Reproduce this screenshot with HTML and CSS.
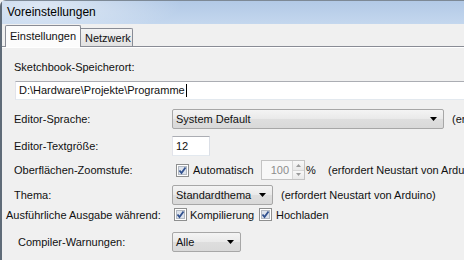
FILE: index.html
```html
<!DOCTYPE html>
<html lang="de">
<head>
  <meta charset="UTF-8" />
  <title>Voreinstellungen</title>
  <link rel="stylesheet" href="styles.css">
</head>
<body>
  <div class="window">
    <div class="titlebar">Voreinstellungen</div>

    <div class="tabs">
      <div class="tab tab-active">Einstellungen</div>
      <div class="tab">Netzwerk</div>
    </div>

    <div class="panel">
      <div class="path-label">Sketchbook-Speicherort:</div>
      <div class="textfield path-field">D:\Hardware\Projekte\Programme<span class="caret"></span></div>

      <div class="row row-lang">
        <span class="label">Editor-Sprache:</span>
        <div class="combo combo-lang">
          <span>System Default</span>
          <svg class="arrow" width="7" height="4" viewBox="0 0 7 4"><polygon points="0,0 7,0 3.5,4" /></svg>
        </div>
        <span class="note">(erfordert Neustart von Arduino)</span>
      </div>

      <div class="row row-size">
        <span class="label">Editor-Textgröße:</span>
        <div class="textfield size-field">12</div>
      </div>

      <div class="row row-zoom">
        <span class="label">Oberflächen-Zoomstufe:</span>
        <label class="check check-auto">
          <svg class="box" width="13" height="13" viewBox="0 0 13 13">
            <rect x="0.5" y="0.5" width="12" height="12" fill="#fff" stroke="#8e8f8f" />
            <rect x="2.5" y="2.5" width="8" height="8" fill="#dde3ec" stroke="#b3b9c2" />
            <path d="M3.5 6.5 L5.5 9 L9.5 3.5" fill="none" stroke="#31518f" stroke-width="1.8" />
          </svg>
          Automatisch
        </label>
        <div class="spinner">
          <span class="spinner-value">100</span>
          <span class="spinner-buttons">
            <span><svg width="5" height="3" viewBox="0 0 5 3"><polygon points="0,3 5,3 2.5,0" /></svg></span>
            <span><svg width="5" height="3" viewBox="0 0 5 3"><polygon points="0,0 5,0 2.5,3" /></svg></span>
          </span>
        </div>
        <span class="percent">%</span>
        <span class="note">(erfordert Neustart von Arduino)</span>
      </div>

      <div class="row row-theme">
        <span class="label">Thema:</span>
        <div class="combo combo-theme">
          <span>Standardthema</span>
          <svg class="arrow" width="7" height="4" viewBox="0 0 7 4"><polygon points="0,0 7,0 3.5,4" /></svg>
        </div>
        <span class="note">(erfordert Neustart von Arduino)</span>
      </div>

      <div class="row row-verbose">
        <span class="label label-wide">Ausführliche Ausgabe während:</span>
        <label class="check check-compile">
          <svg class="box" width="13" height="13" viewBox="0 0 13 13">
            <rect x="0.5" y="0.5" width="12" height="12" fill="#fff" stroke="#8e8f8f" />
            <rect x="2.5" y="2.5" width="8" height="8" fill="#dde3ec" stroke="#b3b9c2" />
            <path d="M3.5 6.5 L5.5 9 L9.5 3.5" fill="none" stroke="#31518f" stroke-width="1.8" />
          </svg>
          Kompilierung
        </label>
        <label class="check">
          <svg class="box" width="13" height="13" viewBox="0 0 13 13">
            <rect x="0.5" y="0.5" width="12" height="12" fill="#fff" stroke="#8e8f8f" />
            <rect x="2.5" y="2.5" width="8" height="8" fill="#dde3ec" stroke="#b3b9c2" />
            <path d="M3.5 6.5 L5.5 9 L9.5 3.5" fill="none" stroke="#31518f" stroke-width="1.8" />
          </svg>
          Hochladen
        </label>
      </div>

      <div class="row row-warn">
        <span class="label label-indent">Compiler-Warnungen:</span>
        <div class="combo combo-warn">
          <span>Alle</span>
          <svg class="arrow" width="7" height="4" viewBox="0 0 7 4"><polygon points="0,0 7,0 3.5,4" /></svg>
        </div>
      </div>
    </div>
  </div>
</body>
</html>
```

FILE: styles.css
```css
* {
  box-sizing: border-box;
}

body {
  margin: 0;
  width: 464px;
  height: 260px;
  overflow: hidden;
  background: #f0f0f0;
  font-family: "Liberation Sans", Arial, sans-serif;
  font-size: 11px;
  color: #111;
}

.window {
  width: 640px;
  height: 300px;
  border-left: 2px solid #5f6b78;
  border-top: 1px solid #7d8996;
  border-top-left-radius: 6px;
  background: #f0f0f0;
}

.titlebar {
  height: 23px;
  padding-left: 5px;
  font-size: 12px;
  line-height: 23px;
  color: #000;
  background:
    radial-gradient(ellipse 140px 30px at 40px 4px, rgba(255, 255, 255, 0.55), rgba(255, 255, 255, 0)),
    linear-gradient(#b2c9e6, #c4d7ee);
}

/* tab strip */
.tabs {
  display: flex;
  align-items: flex-end;
  height: 23px;
  padding-left: 3px;
  border-bottom: 1px solid #898c95;
}

.tab {
  display: flex;
  align-items: center;
  height: 18px;
  width: 52px;
  padding-left: 4px;
  border: 1px solid #898c95;
  border-left: none;
  border-bottom: none;
  border-top-right-radius: 2px;
  background: linear-gradient(#f3f3f3, #e1e1e1);
}

.tab-active {
  width: 76px;
  height: 22px;
  margin-bottom: -1px;
  padding-left: 4px;
  padding-bottom: 2px;
  border-left: 1px solid #898c95;
  border-top-left-radius: 2px;
  background: #fcfcfc;
}

/* settings panel */
.panel {
  padding: 14px 0 0 12px;
  box-shadow: inset 0 1px #fff;
}

.path-label {
  line-height: 13px;
}

.textfield {
  background: #fff;
  border: 1px solid #a9abb2;
  border-color: #abadb3 #dbdfe6 #e3e9ef #e2e3ea;
  padding-left: 3px;
  line-height: 17px;
  white-space: nowrap;
}

.path-field {
  margin-top: 7px;
  height: 19px;
  margin-left: 1px;
}

.caret {
  display: inline-block;
  width: 1px;
  height: 13px;
  margin-left: 1px;
  vertical-align: -3px;
  background: #000;
}

.row {
  display: flex;
  align-items: center;
  height: 20px;
  white-space: nowrap;
}

.row-lang {
  margin-top: 9px;
}

.row-size {
  margin-top: 7px;
}

.row-zoom {
  margin-top: 4px;
}

.row-theme {
  margin-top: 5px;
}

.row-verbose {
  margin-top: 1px;
  height: 17px;
}

.row-warn {
  margin-top: 9px;
}

.label {
  flex-shrink: 0;
  width: 158px;
}

.label-wide {
  width: 167px;
  margin-left: -8px;
}

.label-indent {
  width: 154px;
  margin-left: 4px;
}

.combo {
  flex-shrink: 0;
  display: flex;
  align-items: center;
  justify-content: space-between;
  height: 20px;
  padding: 0 6px 0 3px;
  border: 1px solid #a7a7a7;
  border-radius: 2px;
  background: linear-gradient(#f4f4f4, #e9e9e9 50%, #dedede 51%, #d9d9d9);
}

.combo-lang {
  width: 272px;
}

.combo-theme {
  width: 101px;
}

.combo-warn {
  width: 69px;
}

.arrow polygon {
  fill: #000;
}

.note {
  margin-left: 8px;
}

.size-field {
  width: 38px;
  height: 20px;
  line-height: 18px;
}

.check {
  flex-shrink: 0;
  display: flex;
  align-items: center;
  gap: 4px;
}

.check-auto {
  width: 85px;
  margin-left: 4px;
}

.check-compile {
  width: 85px;
  margin-left: 1px;
  gap: 3px;
}

/* disabled zoom spinner */
.spinner {
  flex-shrink: 0;
  display: flex;
  width: 44px;
  height: 20px;
  border: 1px solid #c3c3c3;
  background: #f7f7f7;
}

.spinner-value {
  flex: 1;
  text-align: right;
  padding-right: 3px;
  line-height: 18px;
  color: #8c8c8c;
}

.spinner-buttons {
  display: flex;
  flex-direction: column;
  width: 12px;
  border-left: 1px solid #d6d6d6;
}

.spinner-buttons span {
  flex: 1;
  display: flex;
  align-items: center;
  justify-content: center;
  background: linear-gradient(#f8f8f8, #e9e9e9);
}

.spinner-buttons span + span {
  border-top: 1px solid #d6d6d6;
}

.spinner-buttons polygon {
  fill: #9a9a9a;
}

.percent {
  flex-shrink: 0;
  width: 22px;
  margin-left: 1px;
}

.row-zoom .note {
  margin-left: 0;
}
```
